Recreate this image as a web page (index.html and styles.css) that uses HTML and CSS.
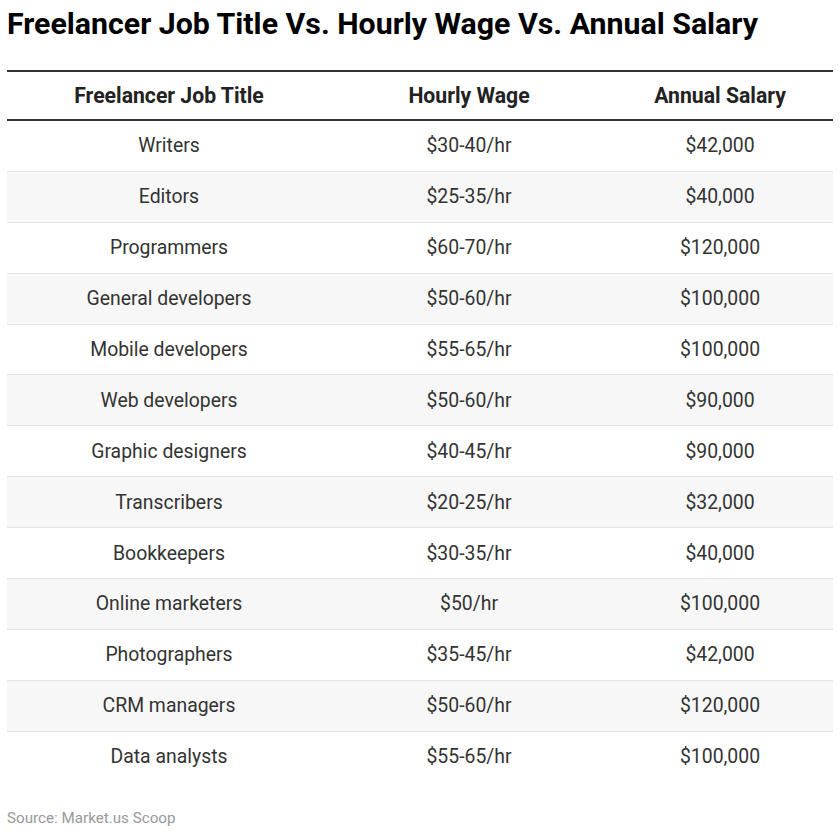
FILE: index.html
```html
<!DOCTYPE html>
<html>
<head>
<meta charset="utf-8">
<link rel="stylesheet" href="styles.css">
</head>
<body>
<div class="wrap">
  <h1 class="title">Freelancer Job Title Vs. Hourly Wage Vs. Annual Salary</h1>
  <table class="tbl">
    <thead>
      <tr><th class="c1">Freelancer Job Title</th><th class="c2">Hourly Wage</th><th class="c3">Annual Salary</th></tr>
    </thead>
    <tbody>
      <tr><td>Writers</td><td>$30-40/hr</td><td>$42,000</td></tr>
      <tr><td>Editors</td><td>$25-35/hr</td><td>$40,000</td></tr>
      <tr><td>Programmers</td><td>$60-70/hr</td><td>$120,000</td></tr>
      <tr><td>General developers</td><td>$50-60/hr</td><td>$100,000</td></tr>
      <tr><td>Mobile developers</td><td>$55-65/hr</td><td>$100,000</td></tr>
      <tr><td>Web developers</td><td>$50-60/hr</td><td>$90,000</td></tr>
      <tr><td>Graphic designers</td><td>$40-45/hr</td><td>$90,000</td></tr>
      <tr><td>Transcribers</td><td>$20-25/hr</td><td>$32,000</td></tr>
      <tr><td>Bookkeepers</td><td>$30-35/hr</td><td>$40,000</td></tr>
      <tr><td>Online marketers</td><td>$50/hr</td><td>$100,000</td></tr>
      <tr><td>Photographers</td><td>$35-45/hr</td><td>$42,000</td></tr>
      <tr><td>CRM managers</td><td>$50-60/hr</td><td>$120,000</td></tr>
      <tr><td>Data analysts</td><td>$55-65/hr</td><td>$100,000</td></tr>
    </tbody>
  </table>
  <div class="source">Source: Market.us Scoop</div>
</div>
</body>
</html>
```
FILE: styles.css
```css
html, body { margin: 0; padding: 0; background: #fff; }
body { font-family: Roboto, "Liberation Sans", sans-serif; color: #333; }
.wrap { padding: 0 7px; }
.title {
  margin: 0;
  padding-top: 6px;
  font-size: 30.3px;
  line-height: 36px;
  font-weight: 700;
  color: #000;
  height: 70px;
  box-sizing: border-box;
}
.tbl {
  width: 826px;
  border-collapse: collapse;
  table-layout: fixed;
  border-top: 2px solid #333;
}
.tbl th {
  height: 47px;
  font-size: 21.2px;
  font-weight: 700;
  color: #222;
  text-align: center;
  border-bottom: 2px solid #333;
  padding: 0;
}
.c1 { width: 324px; }
.c2 { width: 276px; }
.c3 { width: 226px; }
.tbl td {
  height: 49.9px;
  padding: 0;
  text-align: center;
  font-size: 19.4px;
  color: #333;
  border-bottom: 1px solid #e3e3e3;
}
.tbl tbody tr:nth-child(even) td { background: #f7f7f7; }
.tbl tbody tr:last-child td { border-bottom: none; }
.source {
  margin-top: 27px;
  font-size: 15.2px;
  color: #999;
}
```
